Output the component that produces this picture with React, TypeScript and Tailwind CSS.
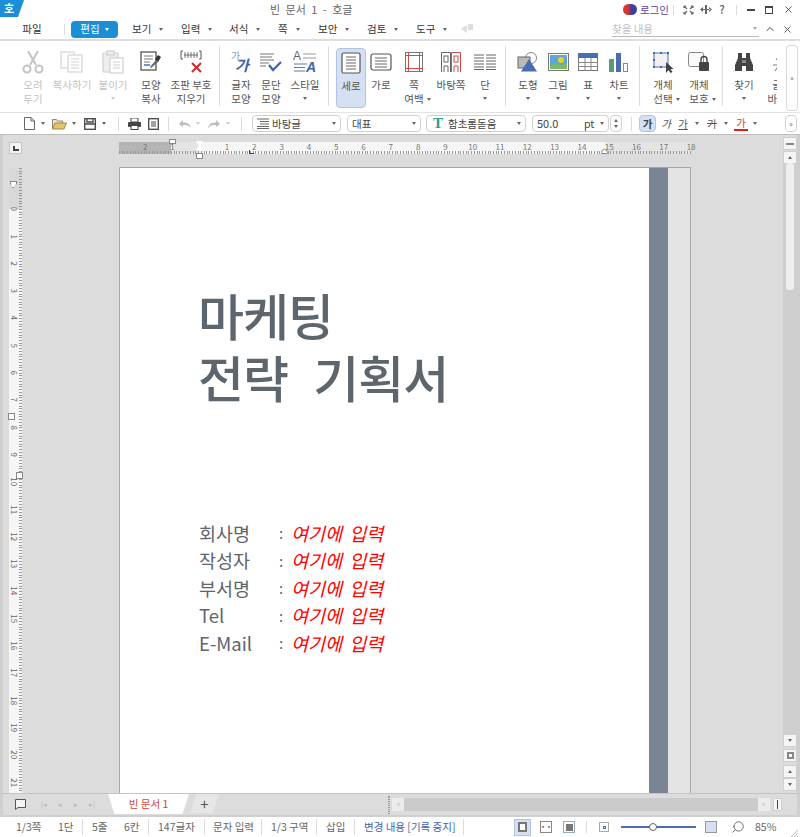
import { ChevronUp, Search, X } from 'lucide-react'
import type { ReactNode } from 'react'

const KR = "font-['Noto_Sans_CJK_KR','Noto_Sans',sans-serif]"

function Caret({ className = '' }: { className?: string }) {
  return <span className={`inline-block h-0 w-0 border-x-[2.5px] border-t-[3px] border-x-transparent border-t-[#666] ${className}`} />
}

function MenuItem({ label, width }: { label: string; width: string }) {
  return (
    <div className={`flex items-center ${width}`}>
      <span>{label}</span>
      <Caret className="ml-[8px]" />
    </div>
  )
}

function Sep({ className = '' }: { className?: string }) {
  return <div className={`w-px bg-[#dcdcdc] ${className}`} />
}

/* ---------- ribbon icons ---------- */
const ScissorsIcon = () => (
  <svg width="22" height="24" viewBox="0 0 22 24" fill="none" stroke="#c4c4c4" strokeWidth="2">
    <path d="M6 1l8 14M16 1L8 15" />
    <circle cx="5" cy="19" r="3.5" />
    <circle cx="17" cy="19" r="3.5" />
  </svg>
)
const CopyIcon = () => (
  <svg width="24" height="22" viewBox="0 0 24 22" fill="#fff" stroke="#d4d4d4" strokeWidth="1.2">
    <rect x="1" y="1" width="13" height="16" />
    <rect x="8" y="4" width="14" height="17" />
    <path d="M11 8h8M11 11h8M11 14h8M11 17h8" />
  </svg>
)
const PasteIcon = () => (
  <svg width="22" height="24" viewBox="0 0 22 24" fill="#eee" stroke="#d0d0d0" strokeWidth="1.2">
    <rect x="1" y="3" width="15" height="19" rx="1" />
    <rect x="5" y="1" width="7" height="4" />
    <rect x="8" y="8" width="13" height="15" fill="#fff" />
    <path d="M11 12h7M11 15h7M11 18h7" />
  </svg>
)
const FormatCopyIcon = () => (
  <svg width="22" height="22" viewBox="0 0 22 22" fill="none">
    <rect x="1" y="1" width="15" height="18" fill="#fff" stroke="#555" strokeWidth="1.3" />
    <path d="M4 5h9M4 8h9M4 11h6" stroke="#777" />
    <path d="M4 14h6" stroke="#4a6fc0" strokeWidth="1.5" />
    <path d="M10 16l6-7 2 2-7 6z" fill="#666" />
    <path d="M15 8l3-4 3 2-3 5z" fill="#333" />
  </svg>
)
const ClearCodeIcon = () => (
  <svg width="22" height="24" viewBox="0 0 22 24" fill="none" stroke="#555">
    <path d="M3 1H1v8h2M19 1h2v8h-2" />
    <path d="M5 2v6M8 2v6M11 2v6M14 2v6M17 2v6M4 5h14" strokeWidth="0.8" />
    <path d="M12 13l9 9M21 13l-9 9" stroke="#d02b2b" strokeWidth="2" />
  </svg>
)
const CharShapeIcon = () => (
  <div className="relative h-[20px] w-[20px]">
    <span className="absolute left-0 top-[-1px] text-[10px] leading-none text-[#999]">가</span>
    <span className="absolute left-[4px] top-[5px] text-[15px] font-bold italic leading-none text-[#3f63ad]">가</span>
  </div>
)
const ParaShapeIcon = () => (
  <svg width="24" height="20" viewBox="0 0 24 20" fill="none">
    <path d="M1 2h14M1 5h12M1 8h14M1 11h9M1 14h6" stroke="#777" />
    <path d="M10 13l4 5 8-8" stroke="#3f63ad" strokeWidth="2.2" />
  </svg>
)
const StyleIcon = () => (
  <div className="relative h-[22px] w-[24px]">
    <span className="absolute left-0 top-[-1px] font-['Liberation_Sans',sans-serif] text-[12px] leading-none text-[#666]">A</span>
    <svg className="absolute inset-0" width="24" height="22" viewBox="0 0 24 22" fill="none">
      <path d="M10 3h13M10 7h13" stroke="#999" />
      <path d="M1 13h13M1 16.500h11M1 20h11" stroke="#5577bb" />
    </svg>
    <span className="absolute left-[13px] top-[9px] font-['Liberation_Sans',sans-serif] text-[14px] font-bold italic leading-none text-[#3f63ad]">A</span>
  </div>
)
const PortraitIcon = () => (
  <svg width="20" height="22" viewBox="0 0 20 22" fill="#fff" stroke="#555" strokeWidth="1.2">
    <rect x="1" y="1" width="18" height="20" rx="1.5" />
    <path d="M5 5h10M5 8h10M5 11h10M5 14h10M5 17h10" strokeWidth="0.9" />
  </svg>
)
const LandscapeIcon = () => (
  <svg width="22" height="18" viewBox="0 0 22 18" fill="#fff" stroke="#555" strokeWidth="1.2">
    <rect x="1" y="1" width="20" height="16" rx="2" />
    <path d="M5 5h12M5 8h12M5 11h12M5 14h12" strokeWidth="0.9" />
  </svg>
)
const MarginIcon = () => (
  <svg width="18" height="20" viewBox="0 0 18 20" fill="#fff">
    <rect x=".5" y=".5" width="17" height="19" stroke="#777" />
    <path d="M3.5 0v20M14.5 0v20M0 3.5h18M0 16.5h18" stroke="#cf4b4b" fill="none" />
  </svg>
)
const MasterPageIcon = () => (
  <svg width="20" height="20" viewBox="0 0 20 20" fill="none">
    <path d="M.5 20V.5h9V20M3 20v-6h4v6" stroke="#666" />
    <rect x="3" y="4" width="4" height="6" stroke="#666" />
    <path d="M10.500 20V.5h9V20M13 20v-6h4v6" stroke="#cf4b4b" />
    <rect x="13" y="4" width="4" height="6" stroke="#cf4b4b" />
  </svg>
)
const ColumnIcon = () => (
  <svg width="22" height="16" viewBox="0 0 22 16" fill="none" stroke="#666">
    <path d="M0 1h10M0 4h10M0 7h10M0 10h10M0 13h10M0 15.5h10M12 1h10M12 4h10M12 7h10M12 10h10M12 13h10M12 15.5h10" />
  </svg>
)
const ShapeIcon = () => (
  <svg width="22" height="20" viewBox="0 0 22 20" fill="none">
    <circle cx="14" cy="6" r="5.5" fill="#fff" stroke="#888" />
    <rect x="1" y="5" width="12" height="11" fill="#bbb" stroke="#666" />
    <path d="M4 19.5L12 7l8 12.5z" fill="#4a6cb5" />
  </svg>
)
const PictureIcon = () => (
  <svg width="21" height="18" viewBox="0 0 21 18">
    <rect x=".5" y=".5" width="20" height="17" fill="#fff" stroke="#777" />
    <rect x="2" y="2" width="17" height="14" fill="#5ba7d8" />
    <path d="M2 13l5-3 6 2 6-2v6H2z" fill="#7cbb63" />
    <circle cx="13" cy="7" r="3" fill="#f3cf1f" />
  </svg>
)
const TableIcon = () => (
  <svg width="20" height="18" viewBox="0 0 20 18" fill="#fff">
    <rect x=".5" y=".5" width="19" height="17" stroke="#777" />
    <rect x="0" y="0" width="20" height="5" fill="#4a6cb5" />
    <path d="M7 5v13M13 5v13M0 9.5h20M0 13.5h20" stroke="#888" fill="none" />
  </svg>
)
const ChartIcon = () => (
  <svg width="20" height="19" viewBox="0 0 20 19">
    <rect x="0" y="6" width="5" height="13" fill="#5a9b79" />
    <rect x="7" y="0" width="5" height="19" fill="#4a6cb5" />
    <rect x="14.5" y="10.5" width="4" height="8" fill="#fff" stroke="#888" />
  </svg>
)
const SelectIcon = () => (
  <svg width="22" height="22" viewBox="0 0 22 22" fill="none">
    <rect x="2" y="2" width="14" height="14" fill="#f1f1f1" stroke="#4a6cb5" />
    {[[2, 2], [9, 2], [16, 2], [2, 9], [2, 16], [9, 16]].map(([x, y]) => (
      <rect key={`${x}-${y}`} x={x - 1} y={y - 1} width="2" height="2" fill="#3f63ad" />
    ))}
    <path d="M14 11v11l2.500-3 2 3 2-1-2-3h3z" fill="#444" />
  </svg>
)
const ProtectIcon = () => (
  <svg width="22" height="20" viewBox="0 0 22 20" fill="none">
    <rect x=".5" y=".5" width="15" height="14" rx="2" fill="#fafafa" stroke="#888" />
    <rect x="11" y="10" width="10" height="9" rx="1" fill="#444" />
    <path d="M13 10V7.500a3 3 0 016 0V10" stroke="#444" strokeWidth="1.400" />
  </svg>
)
const FindIcon = () => (
  <svg width="18" height="18" viewBox="0 0 18 18" fill="#444">
    <path d="M3 0h4v5h4V0h4v5l3 7v6h-7v-5H7v5H0v-6l3-7z" />
    <path d="M7 7h4v3H7z" fill="#888" />
  </svg>
)
const ReplaceIcon = () => (
  <svg width="22" height="20" viewBox="0 0 22 20" fill="none" stroke="#777">
    <path d="M10 1L5 8M2 13h9M9 11l-5 8" />
  </svg>
)

function RibbonButton({ icon, lines, width, dim, caret, lastCaret }: {
  icon: ReactNode
  lines: string[]
  width: string
  dim?: boolean
  caret?: boolean
  lastCaret?: boolean
}) {
  return (
    <div className={`flex shrink-0 flex-col items-center pt-[5px] ${width}`}>
      <div className="flex h-[26px] items-center justify-center">{icon}</div>
      <div className={`mt-[3px] flex flex-col items-center whitespace-nowrap text-[10.5px] leading-[13.500px] ${dim ? 'text-[#c2c2c2]' : 'text-[#555]'}`}>
        {lines.map((line, i) => (
          <span key={line} className="relative">
            {line}
            {lastCaret && i === lines.length - 1 && <Caret className="absolute -right-[7px] top-[6px]" />}
          </span>
        ))}
        {caret && <span className="flex h-[13px] items-center"><Caret className={dim ? 'border-t-[#ccc]' : ''} /></span>}
      </div>
    </div>
  )
}

/* ---------- toolbar icons ---------- */
const NewIcon = () => (
  <svg width="11" height="13" viewBox="0 0 11 13" fill="#fff" stroke="#666"><path d="M.5.500h6.500l3.500 3.500v8.500H.5zM7 .500V4h3.500" /></svg>
)
const OpenIcon = () => (
  <svg width="15" height="12" viewBox="0 0 15 12"><path d="M.5 11V1.500h4l1 1.500h5v2" fill="#f4e3b5" stroke="#888" /><path d="M.5 11l2.500-6h11.500L12 11z" fill="#e8c468" stroke="#a08a50" /></svg>
)
const SaveIcon = () => (
  <svg width="12" height="12" viewBox="0 0 12 12" fill="none" stroke="#444" strokeWidth="1.300"><rect x=".7" y=".7" width="10.600" height="10.600" /><path d="M1 6h10M3 1v3h6V1" /></svg>
)
const PrintIcon = () => (
  <svg width="13" height="12" viewBox="0 0 13 12" fill="#444"><rect x="3" y="0" width="7" height="4" fill="#fff" stroke="#444" /><rect x="0" y="4" width="13" height="5" rx="1" /><rect x="3" y="7.500" width="7" height="4" fill="#fff" stroke="#444" /></svg>
)
const PreviewIcon = () => (
  <svg width="11" height="12" viewBox="0 0 11 12" fill="#fff" stroke="#444" strokeWidth="1.300"><rect x=".7" y=".7" width="9.600" height="10.600" /><path d="M3 4h5M3 6h5M3 8h5" strokeWidth="1" /></svg>
)
const UndoIcon = ({ flip }: { flip?: boolean }) => (
  <svg width="12" height="8" viewBox="0 0 12 8" fill="#bdbdbd" className={flip ? '-scale-x-100' : ''}><path d="M0 4l4-4v2.500c4 0 7 1 8 5.500-2-2.500-4-3-8-3V7z" /></svg>
)

function Select({ width, children, ml }: { width: string; children: ReactNode; ml: string }) {
  return (
    <div className={`flex h-[17px] shrink-0 items-center justify-between rounded-sm border border-[#d0d0d0] bg-white px-[4px] text-[10.500px] text-[#444] ${width} ${ml}`}>
      <span className="flex items-center gap-[3px] whitespace-nowrap">{children}</span>
      <Caret />
    </div>
  )
}

/* ---------- rulers ---------- */
const H_NUMBERS = ['2', '1', '', '1', '2', '3', '4', '5', '6', '7', '8', '9', '10', '11', '12', '13', '14', '15', '16', '17', '18']
const V_NUMBERS = ['', '0', '1', '2', '3', '4', '5', '6', '7', '8', '9', '10', '11', '12', '13', '14', '15', '16', '17', '18', '19', '20', '21']

function HRuler() {
  return (
    <div className="relative flex h-[12px] w-[572px] shrink-0 bg-[#f6f6f6]">
      <div className="absolute inset-y-0 left-0 w-[52px] bg-[#b4b4b4]" />
      <div className="absolute inset-y-0 left-[52px] w-[28px] bg-[#e4e4e4]" />
      <div className="absolute inset-y-0 right-0 w-[85px] bg-[#e4e4e4]" />
      <div className="absolute inset-x-0 bottom-0 h-[3px] bg-[repeating-linear-gradient(90deg,#999_0,#999_1px,transparent_1px,transparent_2.730px)]" />
      <div className="relative flex pl-[12.500px]">
        {H_NUMBERS.map((n, i) => (
          <span key={i} className="flex h-[10px] w-[27.300px] items-center justify-center text-[8px] text-[#777]">{n}</span>
        ))}
      </div>
      {/* indent and margin markers */}
      <div className="absolute -top-[3px] left-[50px] h-[5px] w-[7px] border border-[#888] bg-white" />
      <div className="absolute -top-[1px] left-[77px] h-[9px] w-[7px] bg-white [clip-path:polygon(0_0,100%_0,60%_50%,100%_100%,0_100%,40%_50%)]" />
      <div className="absolute -bottom-[5px] left-[77px] h-[6px] w-[7px] border border-[#888] bg-white" />
      <div className="absolute bottom-0 left-[130px] h-[4px] w-[5px] border-b border-l border-[#444]" />
      <div className="absolute bottom-0 left-[482px] h-[5px] w-[7px] rounded-t-full border border-[#888] bg-white" />
    </div>
  )
}

function VRuler() {
  return (
    <div className="relative h-full w-[13px] shrink-0">
      <div className="absolute inset-0 overflow-hidden bg-[#f6f6f6]">
        <div className="absolute inset-x-0 top-0 h-[41px] bg-[#d8d8d8]" />
        <div className="absolute inset-y-0 right-0 w-[3px] bg-[repeating-linear-gradient(180deg,#999_0,#999_1px,transparent_1px,transparent_2.730px)]" />
        <div className="relative flex flex-col">
          {V_NUMBERS.map((n, i) => (
            <span key={i} className="flex h-[27.300px] w-[10px] shrink-0 rotate-90 items-center justify-center text-[8px] text-[#666]">{n}</span>
          ))}
        </div>
      </div>
      {/* indent and margin markers */}
      <div className="absolute left-[1px] top-[13px] h-[7px] w-[7px] border border-[#888] bg-white [clip-path:polygon(0_0,100%_0,100%_50%,60%_50%,60%_100%,30%_100%,30%_50%,0_50%)]" />
      <div className="absolute -left-[1px] top-[245px] h-[7px] w-[7px] border border-[#888] bg-white" />
      <div className="absolute left-[7px] top-[304px] h-[7px] w-[7px] border border-[#888] bg-white" />
    </div>
  )
}

function SideButton({ children }: { children: ReactNode }) {
  return <div className="flex h-[13px] w-[14px] items-center justify-center border border-[#cfcfcf] bg-[#f5f5f5]">{children}</div>
}

const FIELDS = ['회사명', '작성자', '부서명', 'Tel', 'E-Mail']

export default function App() {
  return (
    <div className={`flex h-[837px] w-[800px] flex-col overflow-hidden bg-white text-[#333] ${KR}`}>
      {/* Title bar */}
      <div className="flex h-[19px] shrink-0 items-center text-[10.500px]">
        <div className="flex h-[17px] w-[24px] items-center justify-center self-start bg-[#1b8fd6] text-[11px] font-bold text-white [clip-path:polygon(0_0,100%_0,75%_100%,0_100%)]">
          <span className="-ml-[6px]">호</span>
        </div>
        <div className="ml-[246px] w-[353px] text-[11px] text-[#666] [word-spacing:3px]">빈 문서 1 - 호글</div>
        <span className="h-[11px] w-[14px] rounded-full bg-[linear-gradient(90deg,#d9362b_0%,#d9362b_35%,#3a3fa8_60%)]" />
        <span className="ml-[3px] w-[27px] whitespace-nowrap text-[#5b3fa3]">로그인</span>
        <Sep className="ml-[6px] h-[10px]" />
        <svg className="ml-[9px]" width="11" height="10" viewBox="0 0 11 10" fill="none" stroke="#666" strokeWidth="1.200"><path d="M1 1l3 3M10 1L7 4M1 9l3-3M10 9L7 6M1 1h2M1 1v2M10 1H8M10 1v2M1 9h2M1 9V7M10 9H8M10 9V7" /></svg>
        <svg className="ml-[6px]" width="12" height="9" viewBox="0 0 12 9" fill="#666"><path d="M0 4.500L3 2v5zM12 4.500L9 2v5zM5 0h2v9H5zM2 4h8v1H2z" /></svg>
        <span className="ml-[6px] w-[8px] text-center text-[11px] font-medium text-[#555]">?</span>
        <Sep className="ml-[10px] h-[10px]" />
        <span className="ml-[10px] h-[2px] w-[8px] bg-[#444]" />
        <span className="ml-[10px] h-[8px] w-[8px] border border-t-2 border-[#444]" />
        <X className="ml-[10px]" size={11} strokeWidth={1.800} color="#444" />
      </div>

      {/* Menu row */}
      <div className="flex h-[22px] shrink-0 items-center border-b-2 border-[#dedede] text-[10.500px] text-[#333]">
        <span className="w-[64px] text-center">파일</span>
        <Sep className="h-[11px]" />
        <div className="ml-[6px] flex h-[17px] w-[47px] items-center justify-center gap-[5px] rounded-sm bg-[#1b8fd6] text-white">
          편집 <Caret className="border-t-white" />
        </div>
        <div className="ml-[14px] flex">
          <MenuItem label="보기" width="w-[49px]" />
          <MenuItem label="입력" width="w-[48px]" />
          <MenuItem label="서식" width="w-[49px]" />
          <MenuItem label="쪽" width="w-[40px]" />
          <MenuItem label="보안" width="w-[49px]" />
          <MenuItem label="검토" width="w-[49px]" />
          <MenuItem label="도구" width="w-[50px]" />
        </div>
        <svg className="-ml-[5px]" width="12" height="10" viewBox="0 0 12 10" fill="#ddd"><path d="M0 5l6-4v8zM7 0h5v6H7z" /></svg>
        <div className="ml-[139px] flex h-[16px] w-[147px] items-center justify-between border-b border-[#bbb] text-[#c0c0c0]">
          찾을 내용
          <Caret className="mr-[2px] border-t-[#aaa]" />
        </div>
        <ChevronUp className="ml-[5px]" size={12} strokeWidth={2} color="#444" />
        <X className="ml-[6px]" size={11} strokeWidth={1.800} color="#444" />
      </div>

      {/* Ribbon */}
      <div className="flex h-[72px] shrink-0 items-start border-b border-[#e2e2e2] pl-[15px] pt-[3px]">
        <RibbonButton width="w-[36px]" dim icon={<ScissorsIcon />} lines={['오려', '두기']} />
        <RibbonButton width="w-[42px]" dim icon={<CopyIcon />} lines={['복사하기']} />
        <RibbonButton width="w-[40px]" dim icon={<PasteIcon />} lines={['붙이기']} caret />
        <RibbonButton width="w-[36px]" icon={<FormatCopyIcon />} lines={['모양', '복사']} />
        <RibbonButton width="w-[44px]" icon={<ClearCodeIcon />} lines={['조판 부호', '지우기']} />
        <Sep className="ml-[6px] mr-[6px] mt-[2px] h-[60px]" />
        <RibbonButton width="w-[30px]" icon={<CharShapeIcon />} lines={['글자', '모양']} />
        <RibbonButton width="w-[30px]" icon={<ParaShapeIcon />} lines={['문단', '모양']} />
        <RibbonButton width="w-[38px]" icon={<StyleIcon />} lines={['스타일']} caret />
        <Sep className="ml-[4px] mr-[7px] mt-[2px] h-[60px]" />
        <div className="mt-[4px] flex h-[60px] w-[30px] shrink-0 flex-col items-center rounded-sm border border-[#b3c3e0] bg-[#d5e1f3] pt-[1px] text-[10.500px] leading-[13.500px] text-[#555]">
          <div className="flex h-[26px] items-center justify-center"><PortraitIcon /></div>
          <span className="mt-[3px]">세로</span>
        </div>
        <RibbonButton width="w-[30px]" icon={<LandscapeIcon />} lines={['가로']} />
        <RibbonButton width="w-[36px]" icon={<MarginIcon />} lines={['쪽', '여백']} lastCaret />
        <RibbonButton width="w-[38px]" icon={<MasterPageIcon />} lines={['바탕쪽']} />
        <RibbonButton width="w-[30px]" icon={<ColumnIcon />} lines={['단']} caret />
        <Sep className="ml-[5px] mr-[7px] mt-[2px] h-[60px]" />
        <RibbonButton width="w-[30px]" icon={<ShapeIcon />} lines={['도형']} caret />
        <RibbonButton width="w-[30px]" icon={<PictureIcon />} lines={['그림']} caret />
        <RibbonButton width="w-[30px]" icon={<TableIcon />} lines={['표']} caret />
        <RibbonButton width="w-[32px]" icon={<ChartIcon />} lines={['차트']} caret />
        <Sep className="ml-[4px] mr-[5px] mt-[2px] h-[60px]" />
        <RibbonButton width="w-[36px]" icon={<SelectIcon />} lines={['개체', '선택']} lastCaret />
        <RibbonButton width="w-[36px]" icon={<ProtectIcon />} lines={['개체', '보호']} lastCaret />
        <Sep className="ml-[5px] mr-[6px] mt-[2px] h-[60px]" />
        <RibbonButton width="w-[30px]" icon={<FindIcon />} lines={['찾기']} caret />
        <div className="w-[18px] shrink-0 overflow-hidden">
          <RibbonButton width="w-[46px]" icon={<ReplaceIcon />} lines={['글자', '바꾸기']} />
        </div>
        <div className="ml-[9px] mt-[1px] flex h-[66px] w-[12px] shrink-0 items-center justify-center rounded-sm border border-[#d8d8d8] bg-white text-[8px] text-[#666]">»</div>
      </div>

      {/* Toolbar */}
      <div className="flex h-[22px] shrink-0 items-center border-b border-[#bdbdbd] text-[10.500px]">
        <div className="ml-[24px]"><NewIcon /></div>
        <Caret className="ml-[6px]" />
        <div className="ml-[7px]"><OpenIcon /></div>
        <Caret className="ml-[5px]" />
        <div className="ml-[8px]"><SaveIcon /></div>
        <Caret className="ml-[6px]" />
        <Sep className="ml-[12px] h-[14px]" />
        <div className="ml-[9px]"><PrintIcon /></div>
        <div className="ml-[7px]"><PreviewIcon /></div>
        <Sep className="ml-[9px] h-[14px]" />
        <div className="ml-[10px]"><UndoIcon /></div>
        <Caret className="ml-[5px] border-t-[#ccc]" />
        <div className="ml-[8px]"><UndoIcon flip /></div>
        <Caret className="ml-[6px] border-t-[#ccc]" />
        <Sep className="ml-[11px] h-[14px]" />
        <Select width="w-[89px]" ml="ml-[10px]">
          <svg width="12" height="11" viewBox="0 0 12 11" fill="none" stroke="#666"><path d="M0 1h12M3 3.500h9M3 6h9M0 8.500h12M0 10.500h12" /></svg>
          바탕글
        </Select>
        <Select width="w-[74px]" ml="ml-[6px]">대표</Select>
        <Select width="w-[100px]" ml="ml-[5px]">
          <span className="w-[14px] text-center font-['Liberation_Serif',serif] text-[15px] font-bold leading-none text-[#2f9c8f]">T</span>
          함초롬돋움
        </Select>
        <Select width="w-[77px]" ml="ml-[6px]">
          <span className="w-[44px] text-[11px]">50.0</span>
          <span>pt</span>
        </Select>
        <div className="ml-[1px] flex h-[17px] w-[12px] shrink-0 flex-col items-center justify-center gap-[3px] rounded-sm border border-[#d0d0d0] bg-white">
          <Caret className="rotate-180" />
          <Caret />
        </div>
        <Sep className="ml-[9px] h-[14px]" />
        <div className="ml-[7px] flex h-[17px] w-[17px] items-center justify-center rounded-sm border border-[#b3c3e0] bg-[#d5e1f3] font-bold text-[#444]">가</div>
        <span className="ml-[3px] w-[14px] text-center italic text-[#555]">가</span>
        <span className="ml-[3px] w-[14px] text-center text-[#555] underline">가</span>
        <Caret className="ml-[5px]" />
        <span className="ml-[6px] w-[14px] text-center text-[#555] line-through">가</span>
        <Caret className="ml-[5px]" />
        <span className="ml-[6px] w-[14px] border-b-2 border-[#e81c1c] text-center leading-[12px] text-[#c43]">가</span>
        <Caret className="ml-[5px]" />
        <div className="ml-[28px] flex h-[17px] w-[12px] shrink-0 items-center justify-center rounded-sm border border-[#d0d0d0] bg-white text-[8px] text-[#666]">»</div>
      </div>

      {/* Workspace */}
      <div className="flex min-h-0 flex-1 border-x-[3px] border-[#cfcfcf] bg-[#dcdcdc]">
        <div className="flex min-h-0 flex-1 flex-col">
          <div className="flex h-[33px] shrink-0 items-start pt-[7px]">
            <div className="ml-[6px] flex h-[12px] w-[13px] items-center justify-center border border-[#c4c4c4] bg-[#f4f4f4]">
              <span className="h-[5px] w-[6px] border-b-2 border-l-2 border-[#444]" />
            </div>
            <div className="ml-[97px]"><HRuler /></div>
          </div>
          <div className="flex min-h-0 flex-1 pl-[6px]">
            <VRuler />
            {/* Page */}
            <div className="-mt-px ml-[97px] flex w-[572px] shrink-0 self-stretch border-x border-t border-[#a8a8a8] bg-white">
              <div className="flex w-[529px] flex-col pl-[78px] pt-[115px]">
                <h1 className="text-[50px] font-medium leading-[62px] tracking-[-1px] text-[#5d656d] [word-spacing:15px]">
                  마케팅<br />전략 기획서
                </h1>
                <div className="ml-[1px] mt-[112px] flex flex-col">
                  {FIELDS.map((label) => (
                    <div key={label} className="flex h-[27.500px] items-center text-[18.500px] leading-none text-[#5d656d]">
                      <span className="w-[80px]">{label}</span>
                      <span className="w-[12px] text-[15px]">:</span>
                      <span className="italic text-[#ff0000] [word-spacing:3px]">여기에 입력</span>
                    </div>
                  ))}
                </div>
              </div>
              <div className="w-[19px] bg-[#7a8494]" />
              <div className="flex-1 bg-[#e4e4e4]" />
            </div>
            <div className="flex-1" />
          </div>
        </div>
        {/* Vertical scrollbar */}
        <div className="flex w-[14px] shrink-0 flex-col pb-[2px] pt-[2px]">
          <SideButton><span className="h-[2px] w-[8px] bg-[#888]" /></SideButton>
          <div className="mt-[1px]"><SideButton><Caret className="rotate-180" /></SideButton></div>
          <div className="flex flex-1 flex-col items-center bg-[#cfcfcf]">
            <div className="mt-[-1px] h-[127px] w-[8px] rounded-[3px] bg-[#efefef]" />
          </div>
          <SideButton><Caret /></SideButton>
          <div className="mt-[2px]"><SideButton><span className="h-[7px] w-[7px] border-2 border-[#888]" /></SideButton></div>
          <div className="mt-[3px]"><SideButton><Caret className="rotate-180" /></SideButton></div>
          <SideButton><Caret /></SideButton>
        </div>
      </div>

      {/* Tab bar + horizontal scrollbar */}
      <div className="flex h-[24px] shrink-0 items-center border-x-[3px] border-b-2 border-t border-x-[#cfcfcf] border-b-[#cfcfcf] border-t-[#c4c4c4] bg-[#dcdcdc]">
        <svg className="ml-[12px]" width="11" height="11" viewBox="0 0 11 11" fill="#f5f5f5" stroke="#555"><path d="M.5.500h10v8H3L.5 10.500z" /></svg>
        <Sep className="ml-[7px] h-[13px] bg-[#bbb]" />
        <div className="ml-[7px] flex w-[66px] items-center justify-between pr-[12px] text-[7px] leading-none text-[#bbb]">
          <span>|◂</span><span>◂</span><span>▸</span><span>▸|</span>
        </div>
        <div className="ml-[1px] flex h-[20px] w-[81px] shrink-0 items-center justify-center self-start bg-white text-[10.500px] text-[#d0443c] [clip-path:polygon(0_0,100%_0,92%_100%,8%_100%)]">
          빈 문서 1
        </div>
        <div className="ml-px flex h-[19px] w-[29px] shrink-0 items-center justify-center self-start bg-[#e6e6e6] text-[15px] leading-none text-[#555] [clip-path:polygon(22%_0,100%_0,78%_100%,0_100%)]">+</div>
        <div className="ml-[169px] h-[18px] w-[2px] border-x border-dotted border-[#999]" />
        <div className="ml-[2px] flex h-[13px] w-[378px] items-center justify-between bg-[#cbcbcb]">
          <span className="flex h-[13px] w-[12px] items-center justify-center bg-[#ececec]"><Caret className="rotate-90 border-t-[#ccc]" /></span>
          <span className="flex h-[13px] w-[12px] items-center justify-center bg-[#ececec]"><Caret className="-rotate-90 border-t-[#ccc]" /></span>
        </div>
        <span className="ml-[3px] flex h-[13px] w-[9px] items-center justify-center border border-[#cfcfcf] bg-[#f5f5f5]"><span className="h-[9px] w-px bg-[#444]" /></span>
      </div>

      {/* Status bar */}
      <div className="flex h-[20px] shrink-0 items-center text-[10.500px] text-[#666]">
        <span className="ml-[16px] w-[42px]">1/3쪽</span>
        <span className="w-[24px]">1단</span>
        <Sep className="h-[16px]" />
        <span className="ml-[9px] w-[32px]">5줄</span>
        <span className="w-[24px]">6칸</span>
        <Sep className="h-[16px]" />
        <span className="ml-[9px] w-[46px]">147글자</span>
        <Sep className="h-[16px]" />
        <span className="ml-[8px] w-[48px]">문자 입력</span>
        <Sep className="h-[16px]" />
        <span className="ml-[9px] w-[45px]">1/3 구역</span>
        <Sep className="h-[16px]" />
        <span className="ml-[9px] w-[28px]">삽입</span>
        <Sep className="h-[16px]" />
        <span className="ml-[9px] w-[99px] whitespace-nowrap text-[#3f63ad]">변경 내용 [기록 중지]</span>
        <Sep className="h-[16px]" />
        <div className="ml-[50px] flex h-[17px] w-[17px] items-center justify-center border border-[#b3c3e0] bg-[#d5e1f3]">
          <span className="h-[10px] w-[9px] border-2 border-[#777] bg-white" />
        </div>
        <span className="ml-[9px] flex h-[12px] w-[12px] items-center justify-center border border-[#888] text-[6px] leading-none">▪▪</span>
        <span className="ml-[11px] flex h-[12px] w-[12px] items-center justify-center border border-[#9ab] bg-white"><span className="h-[7px] w-[7px] bg-[#777]" /></span>
        <Sep className="ml-[11px] h-[12px]" />
        <span className="ml-[12px] flex h-[10px] w-[10px] items-center justify-center border border-[#aaa]"><span className="h-[3px] w-[3px] border border-[#4a6cb5]" /></span>
        <div className="relative ml-[12px] flex h-[3px] w-[75px] items-center">
          <span className="h-[1.500px] w-full bg-[#4a6cb5]" />
          <span className="absolute left-[28px] h-[8px] w-[8px] rounded-full border border-[#666] bg-white" />
        </div>
        <span className="ml-[9px] flex h-[12px] w-[12px] items-center justify-center border border-[#999] bg-[#d5e1f3]" />
        <Search className="ml-[14px] -scale-x-100" size={14} strokeWidth={1.600} color="#666" />
        <span className="ml-[10px] text-[#666]">85%</span>
        <svg className="ml-[14px] self-end" width="8" height="8" viewBox="0 0 8 8" fill="none" stroke="#bbb"><path d="M8 1L1 8M8 4L4 8M8 7L7 8" /></svg>
      </div>
    </div>
  )
}
